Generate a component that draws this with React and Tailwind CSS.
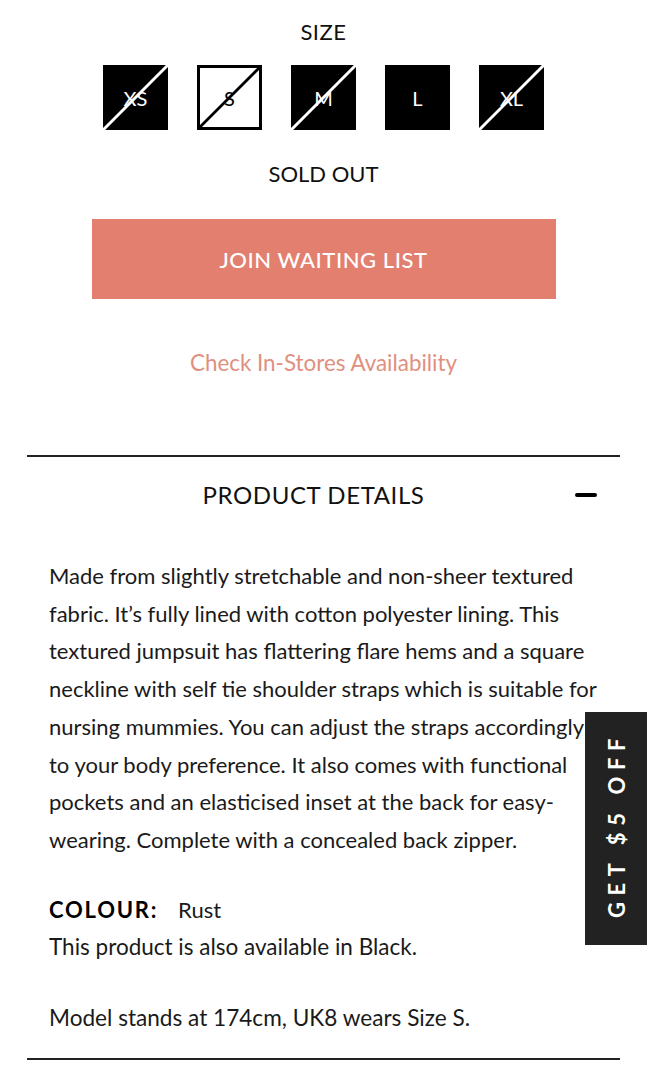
const sizes = [
  { label: 'XS', out: true },
  { label: 'S', out: true, selected: true },
  { label: 'M', out: true },
  { label: 'L', out: false },
  { label: 'XL', out: true },
];

const font = { fontFamily: 'Lato, "Noto Sans", sans-serif' };

function SizeBox({ label, out, selected }) {
  return (
    <div
      className={
        'relative w-[65px] h-[65px] flex items-center justify-center text-[20px] ' +
        (selected ? 'bg-white border-[3px] border-black text-black' : 'bg-black text-white')
      }
    >
      <span>{label}</span>
      {out && (
        <svg className="absolute inset-0 w-full h-full" viewBox="0 0 65 65" preserveAspectRatio="none">
          <line x1="0" y1="65" x2="65" y2="0" stroke={selected ? '#000' : '#fff'} strokeWidth="3" />
        </svg>
      )}
    </div>
  );
}

export default function App() {
  return (
    <div className="relative w-[647px] h-[1080px] bg-white text-[#111] overflow-hidden" style={font}>
      <div className="flex flex-col items-center">
        <p className="mt-[17px] leading-[30px] text-[22px] tracking-wide">SIZE</p>
        <div className="mt-[18px] flex gap-[29px]">
          {sizes.map((s) => (
            <SizeBox key={s.label} {...s} />
          ))}
        </div>
        <p className="mt-[29px] leading-[30px] text-[22px]">SOLD OUT</p>
        <button className="mt-[30px] w-[464px] h-[80px] bg-[#e27f6f] text-white text-[22px] font-medium tracking-wide">
          JOIN WAITING LIST
        </button>
        <p className="mt-[49px] leading-[30px] text-[22.4px] text-[#e0907f]">Check In-Stores Availability</p>
      </div>

      <div className="mx-[27px] mt-[77px] border-t-2 border-[#222]">
        <div className="relative h-[76px] flex items-center justify-center">
          <span className="text-[24px] tracking-wide -ml-[20px]">PRODUCT DETAILS</span>
          <span className="absolute right-[23px] top-[36px] w-[22px] h-[4px] bg-black rounded-sm" />
        </div>

        <div className="px-[22px] text-[22px] leading-[37.7px] text-[#1a1a1a] whitespace-nowrap">
          <p className="mt-[24px]">
            Made from slightly stretchable and non-sheer textured<br />
            fabric. It’s fully lined with cotton polyester lining. This<br />
            textured jumpsuit has flattering flare hems and a square<br />
            neckline with self tie shoulder straps which is suitable for<br />
            nursing mummies. You can adjust the straps accordingly<br />
            to your body preference. It also comes with functional<br />
            pockets and an elasticised inset at the back for easy-<br />
            wearing. Complete with a concealed back zipper.
          </p>
          <p className="mt-[32px]">
            <span className="font-bold text-black tracking-[0.08em]">COLOUR:</span>
            <span className="ml-[20px]">Rust</span>
          </p>
          <p className="text-[22.5px]">This product is also available in Black.</p>
          <p className="mt-[33px] text-[22.6px]">Model stands at 174cm, UK8 wears Size S.</p>
        </div>
        <div className="mt-[21px] border-t-2 border-[#222]" />
      </div>

      <div className="absolute right-0 top-[712px] w-[62px] h-[233px] bg-[#222] flex items-center justify-center">
        <span className="[writing-mode:vertical-rl] rotate-180 text-white font-bold text-[22px] tracking-[0.3em] pt-[6px]">
          GET $5 OFF
        </span>
      </div>
    </div>
  );
}
